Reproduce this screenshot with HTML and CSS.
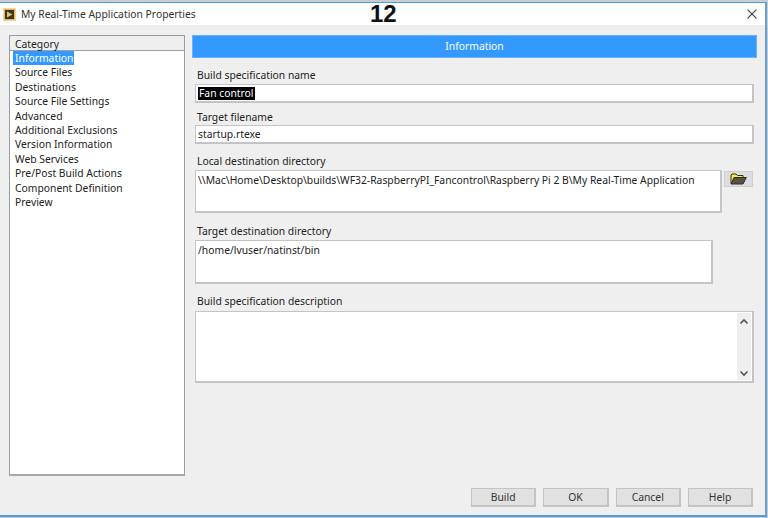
FILE: index.html
```html
<!DOCTYPE html>
<html lang="en">
<head>
<meta charset="utf-8">
<title>My Real-Time Application Properties</title>
<link rel="stylesheet" href="styles.css">
</head>
<body>
<div class="window">
  <header class="titlebar">
    <svg class="app-icon" width="13" height="13" viewBox="0 0 13 13">
      <rect x="0.5" y="0.5" width="12" height="12" fill="#e9b44c" stroke="#f3d9a0"/>
      <rect x="2" y="2" width="9" height="9" fill="#3a3524"/>
      <path d="M4 3.5 L9.5 6.5 L4 9.5 Z" fill="#d9c56a"/>
    </svg>
    <span class="title">My Real-Time Application Properties</span>
    <svg class="close" width="10" height="10" viewBox="0 0 10 10">
      <path d="M0.6 0.6 L9.4 9.4 M9.4 0.6 L0.6 9.4" stroke="#444" stroke-width="1.2" fill="none"/>
    </svg>
  </header>
  <span class="stamp">12</span>
  <div class="content">
    <div class="main">
      <aside class="category">
        <div class="cat-head">Category</div>
        <ul class="cat-list">
          <li><span class="selected">Information</span></li>
          <li>Source Files</li>
          <li>Destinations</li>
          <li>Source File Settings</li>
          <li>Advanced</li>
          <li>Additional Exclusions</li>
          <li>Version Information</li>
          <li>Web Services</li>
          <li>Pre/Post Build Actions</li>
          <li>Component Definition</li>
          <li>Preview</li>
        </ul>
      </aside>
      <section class="panel">
        <div class="panel-head">Information</div>
        <div class="fields">
          <div class="field f1">
            <label class="label">Build specification name</label>
            <div class="box single"><span class="hilite">Fan control</span></div>
          </div>
          <div class="field f2">
            <label class="label">Target filename</label>
            <div class="box single">startup.rtexe</div>
          </div>
          <div class="field f3">
            <label class="label">Local destination directory</label>
            <div class="path-row">
              <div class="box local">\\Mac\Home\Desktop\builds\WF32-RaspberryPI_Fancontrol\Raspberry Pi 2 B\My Real-Time Application</div>
              <button class="browse" type="button" aria-label="Browse">
                <svg width="17" height="12" viewBox="0 0 17 12">
                  <path d="M1 10.5 V2 L2 1 H6 L7.5 2.5 H13 V4" fill="#f4ec3e" stroke="#2e2e20" stroke-width="1"/>
                  <path d="M1 11 L4 4.5 H16.3 L13 11 Z" fill="#55534a" stroke="#2b2b25" stroke-width="1"/>
                </svg>
              </button>
            </div>
          </div>
          <div class="field f4">
            <label class="label">Target destination directory</label>
            <div class="box target">/home/lvuser/natinst/bin</div>
          </div>
          <div class="field f5">
            <label class="label">Build specification description</label>
            <div class="box desc">
              <div class="scroll">
                <svg width="10" height="7" viewBox="0 0 10 7"><path d="M1.5 5.5 L5 2 L8.5 5.5" fill="none" stroke="#555" stroke-width="1.6"/></svg>
                <svg width="10" height="7" viewBox="0 0 10 7"><path d="M1.5 1.5 L5 5 L8.5 1.5" fill="none" stroke="#555" stroke-width="1.6"/></svg>
              </div>
            </div>
          </div>
        </div>
      </section>
    </div>
    <footer class="actions">
      <button class="btn" type="button">Build</button>
      <button class="btn" type="button">OK</button>
      <button class="btn" type="button">Cancel</button>
      <button class="btn" type="button">Help</button>
    </footer>
  </div>
</div>
</body>
</html>
```
FILE: styles.css
```css
* { box-sizing: border-box; }
html, body { margin: 0; height: 100%; }
body {
  width: 768px;
  height: 518px;
  overflow: hidden;
  background: #c9ccd0;
  padding: 2px 1px 1px 0;
  font-family: "Noto Sans", "Open Sans", sans-serif;
  font-size: 10.33px;
  color: #222;
}
.window {
  position: relative;
  height: 515px;
  border-top: 1px solid #4c9fe3;
  border-right: 2px solid #6b9fcf;
  border-bottom: 2px solid #4c9fe3;
  background: #efefef;
  display: flex;
  flex-direction: column;
}
.titlebar {
  height: 22px;
  background: #fff;
  display: flex;
  align-items: center;
  padding: 0 8px 0 3px;
  flex: none;
}
.app-icon { flex: none; }
.title { margin-left: 5px; font-size: 10.33px; color: #333; flex: 1; }
.stamp {
  position: absolute;
  left: 370px;
  top: -3px;
  font: bold 24px/28px "Liberation Sans", sans-serif;
  color: #111;
}
.content {
  flex: 1;
  display: flex;
  flex-direction: column;
  padding: 10px 0 0 9px;
}
.main { display: flex; gap: 7px; }
.category {
  width: 176px;
  height: 441px;
  background: #fff;
  border: 1px solid #9a9ca0;
  border-bottom: 2px solid #a8aaae;
  flex: none;
}
.cat-head {
  height: 15px;
  background: #efefef;
  border-bottom: 1px solid #a0a0a0;
  padding: 1px 0 0 5px;
  line-height: 14px;
}
.cat-list { list-style: none; margin: 0; padding: 0 0 0 3px; }
.cat-list li { height: 14.4px; line-height: 14.4px; padding-left: 2px; white-space: nowrap; }
.selected { display: inline-block; background: #3399ff; color: #fff; margin-left: -2px; padding: 0 1px 0 2px; }
.panel { width: 565px; flex: none; }
.panel-head {
  height: 23px;
  background: #3399ff;
  border: 1px solid #66b2ff;
  color: #fff;
  text-align: center;
  line-height: 21px;
}
.fields { padding-left: 3px; }
.field { display: flex; flex-direction: column; }
.label { height: 14px; line-height: 14px; padding-left: 2px; color: #222; }
.f1 { margin-top: 10px; }
.f2 { margin-top: 7px; }
.f3 { margin-top: 10px; }
.f4 { margin-top: 11px; }
.f5 { margin-top: 10px; }
.box {
  background: #fff;
  border: 1px solid #c4c4c8;
  border-width: 1px 2px 2px 1px;
  padding: 0 2px;
}
.single { width: 559px; height: 19px; line-height: 16px; margin-top: 1px; }
.f1 .single { margin-top: 2px; }
.hilite { display: inline-block; background: #000; color: #fff; padding: 0 1px; line-height: 13px; }
.path-row { display: flex; gap: 2px; align-items: flex-start; margin-top: 2px; }
.local { width: 527px; height: 43px; padding-top: 2px; line-height: 14px; white-space: nowrap; }
.browse {
  width: 29px;
  height: 16px;
  margin-top: 1px;
  padding: 0;
  background: #dedede;
  border: 1px solid #cfcfcf;
  display: flex;
  align-items: center;
  justify-content: center;
}
.target { width: 518px; height: 44px; margin-top: 2px; padding-top: 2px; line-height: 14px; }
.desc { width: 559px; height: 72px; margin-top: 3px; padding: 1px 1px 1px 0; display: flex; justify-content: flex-end; }
.scroll {
  width: 14px;
  background: #efefef;
  display: flex;
  flex-direction: column;
  align-items: center;
  justify-content: space-between;
  padding: 5px 0 3px;
}
.actions {
  display: flex;
  gap: 7px;
  margin-top: 12px;
  padding-left: 462px;
}
.btn {
  width: 65.3px;
  height: 19px;
  padding: 0;
  background: #e1e1e1;
  border: 1px solid #c4c4c4;
  border-width: 1px 2px 2px 1px;
  font: inherit;
  color: #333;
  line-height: 15px;
}
```
